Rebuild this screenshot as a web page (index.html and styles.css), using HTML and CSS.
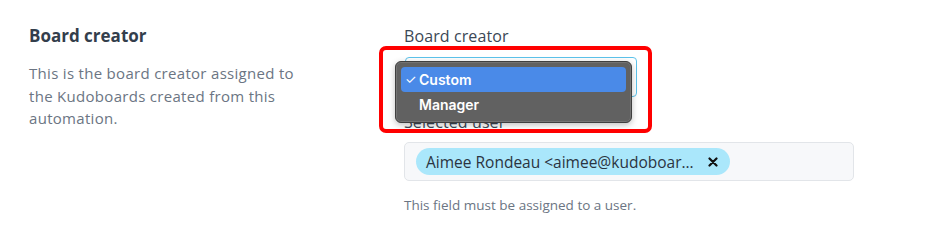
FILE: index.html
```html
<!DOCTYPE html>
<html>
<head>
<meta charset="utf-8">
<link rel="stylesheet" href="styles.css">
</head>
<body>
<div class="page">
  <div class="intro">
    <h2 class="title">Board creator</h2>
    <p class="desc">This is the board creator assigned to the Kudoboards created from this automation.</p>
  </div>
  <div class="fields">
    <div class="label">Board creator</div>
    <div class="select-wrap">
      <div class="select"></div>
      <div class="menu">
        <div class="opt active"><span class="check">✓</span>Custom</div>
        <div class="opt">Manager</div>
      </div>
    </div>
    <div class="label label-user">Selected user</div>
    <div class="input">
      <span class="tag"><span class="tag-text">Aimee Rondeau &lt;aimee@kudoboar...</span><svg class="tag-x" width="10" height="10" viewBox="0 0 10 10"><path d="M1.5 1.5 L8.5 8.5 M8.5 1.5 L1.5 8.5" stroke="#111" stroke-width="2.2" stroke-linecap="round"/></svg></span>
    </div>
    <div class="help">This field must be assigned to a user.</div>
    <div class="annot"></div>
  </div>
</div>
</body>
</html>
```
FILE: styles.css
```css
html, body { margin: 0; padding: 0; background: #fff; }
body { font-family: "Open Sans", Lato, sans-serif; }
.page { display: flex; padding: 25px 0 0 29px; }
.intro { width: 375px; }
.title { margin: 0; font-size: 17px; font-weight: 700; color: #333e4c; line-height: 22px; }
.desc { margin: 15px 0 0; width: 290px; font-size: 15px; letter-spacing: 0.3px; line-height: 22.5px; color: #6b7583; }
.fields { position: relative; width: 450px; }
.label { font-size: 16px; letter-spacing: 0.1px; color: #3b4756; line-height: 22px; }
.select-wrap { position: relative; z-index: 1; margin-top: 10px; }
.select { width: 230px; height: 38px; margin-left: 1px; border: 1px solid #5cc2ea; border-radius: 4px; background: #fff; }
.menu { position: absolute; left: -9px; top: 4px; width: 225px; padding: 5px; background: #616161; border: 1px solid #3f3f3f; border-radius: 6px; box-shadow: inset 0 0 0 1px #747474, 0 2px 6px rgba(0,0,0,.25); font-family: Inter, "Liberation Sans", sans-serif; font-weight: 600; font-size: 14px; color: #fff; letter-spacing: 0; }
.opt { height: 25px; line-height: 25px; padding-left: 18px; position: relative; border-radius: 4px; }
.opt.active { background: #4a8ae8; }
.check { position: absolute; left: 4px; top: 0; font-weight: 400; font-size: 13px; }
.label-user { margin-top: 14px; }
.input { margin-top: 9px; height: 37px; border: 1px solid #e2e5e9; border-radius: 5px; background: #f7f8fa; display: flex; align-items: center; padding-left: 11px; }
.tag { display: inline-flex; align-items: center; height: 27px; padding: 0 12px 0 10px; border-radius: 14px; background: #aae7fb; font-size: 15.5px; color: #2a3441; }
.tag-x { margin-left: 14px; display: block; }
.help { margin-top: 15px; font-size: 13.5px; color: #6b7583; line-height: 18px; }
.annot { position: absolute; z-index: 2; left: -25px; top: 21px; width: 265px; height: 79px; border: 4px solid #ff0000; border-radius: 7px; }
```
